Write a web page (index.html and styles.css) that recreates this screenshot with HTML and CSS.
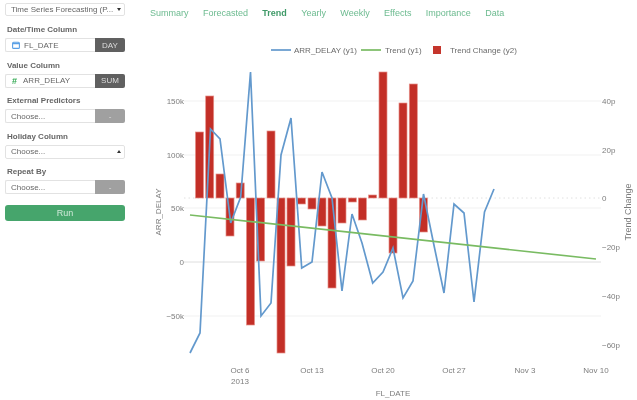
FILE: index.html
```html
<!DOCTYPE html>
<html lang="en">
<head>
<meta charset="utf-8">
<title>Time Series Forecasting</title>
<link rel="stylesheet" href="styles.css">
</head>
<body>
<div class="app">
  <aside class="sidebar">
    <div class="select top"><span class="select-text">Time Series Forecasting (P...</span><i class="caret"></i></div>
    <div class="label first">Date/Time Column</div>
    <div class="row">
      <div class="field">
        <svg class="ficon" viewBox="0 0 8 8"><rect x="0.6" y="1.2" width="6.8" height="6.2" rx="1" fill="none" stroke="#5aa0e6" stroke-width="1.1"/><path d="M0.6 2.6H7.4" stroke="#5aa0e6" stroke-width="1.3"/></svg>
        <span>FL_DATE</span>
      </div>
      <div class="btn dark">DAY</div>
    </div>
    <div class="label">Value Column</div>
    <div class="row">
      <div class="field"><b class="hash">#</b><span>ARR_DELAY</span></div>
      <div class="btn dark">SUM</div>
    </div>
    <div class="label">External Predictors</div>
    <div class="row">
      <div class="field plain"><span>Choose...</span></div>
      <div class="btn mid">-</div>
    </div>
    <div class="label">Holiday Column</div>
    <div class="select wide"><span class="select-text">Choose...</span><i class="caret up"></i></div>
    <div class="label">Repeat By</div>
    <div class="row">
      <div class="field plain"><span>Choose...</span></div>
      <div class="btn mid">-</div>
    </div>
    <div class="run">Run</div>
  </aside>
  <main class="main">
    <nav class="tabs">
      <a>Summary</a><a>Forecasted</a><a class="active">Trend</a><a>Yearly</a><a>Weekly</a><a>Effects</a><a>Importance</a><a>Data</a>
    </nav>
    <svg class="chart" viewBox="133 26 504 374" width="504" height="374">
      <g class="grid">
        <path d="M184 101H601M184 155H601M184 208H601M184 316H601"/>
        <path class="zero" d="M184 262H601"/>
        <path class="dots" d="M184 198H601"/>
      </g>
      <g class="bars">
        <rect x="195.5" y="132" width="8" height="66"/>
        <rect x="205.7" y="96" width="8" height="102"/>
        <rect x="216" y="174" width="8" height="24"/>
        <rect x="226" y="198" width="8" height="38"/>
        <rect x="236.2" y="183" width="8" height="15"/>
        <rect x="246.5" y="198" width="8" height="127"/>
        <rect x="256.6" y="198" width="8" height="63"/>
        <rect x="267" y="131" width="8" height="67"/>
        <rect x="277" y="198" width="8" height="155"/>
        <rect x="287" y="198" width="8" height="68"/>
        <rect x="297.4" y="198" width="8" height="6"/>
        <rect x="308" y="198" width="8" height="11"/>
        <rect x="318" y="198" width="8" height="28"/>
        <rect x="328" y="198" width="8" height="90"/>
        <rect x="338" y="198" width="8" height="25"/>
        <rect x="348.3" y="198" width="8" height="4"/>
        <rect x="358.4" y="198" width="8" height="22"/>
        <rect x="368.6" y="195" width="8" height="3"/>
        <rect x="379" y="72" width="8" height="126"/>
        <rect x="389" y="198" width="8" height="55"/>
        <rect x="399" y="103" width="8" height="95"/>
        <rect x="409.3" y="84" width="8" height="114"/>
        <rect x="419.4" y="198" width="8" height="34"/>
      </g>
      <polyline class="series" points="190,353 200,333 210.5,129 220,139 230.7,223 240.7,197 250.5,72 261,316 271,303 281,155 291,118 301.7,268 312,262 322,172 332,198 342,291 352,214 362,243 372.7,283 383,272 393,248 403,298 413,281 423.5,194 433.5,243 444,293 454,204 464,213 474,302 484.5,212 494,189"/>
      <path class="trend" d="M190 215L596 259"/>
      <g class="ticks end">
        <text x="184" y="104">150k</text>
        <text x="184" y="158">100k</text>
        <text x="184" y="211">50k</text>
        <text x="184" y="265">0</text>
        <text x="184" y="319">−50k</text>
      </g>
      <g class="ticks">
        <text x="602" y="104">40p</text>
        <text x="602" y="153">20p</text>
        <text x="602" y="201">0</text>
        <text x="602" y="250">−20p</text>
        <text x="602" y="299">−40p</text>
        <text x="602" y="348">−60p</text>
      </g>
      <g class="ticks middle">
        <text x="240" y="373">Oct 6</text>
        <text x="240" y="384">2013</text>
        <text x="312" y="373">Oct 13</text>
        <text x="383" y="373">Oct 20</text>
        <text x="454" y="373">Oct 27</text>
        <text x="525" y="373">Nov 3</text>
        <text x="596" y="373">Nov 10</text>
        <text x="393" y="396">FL_DATE</text>
        <text transform="translate(161 212) rotate(-90)">ARR_DELAY</text>
        <text class="big" transform="translate(631 212) rotate(-90)">Trend Change</text>
      </g>
      <g class="legend">
        <path class="series" d="M271 50H291"/>
        <text x="294" y="53">ARR_DELAY (y1)</text>
        <path class="trend" d="M361 50H381"/>
        <text x="385" y="53">Trend (y1)</text>
        <rect class="swatch" x="433" y="46" width="8" height="8"/>
        <text x="450" y="53">Trend Change (y2)</text>
      </g>
    </svg>
  </main>
</div>
</body>
</html>
```
FILE: styles.css
```css
html, body {
  margin: 0;
  padding: 0;
  background: #fff;
}
.app {
  display: flex;
  width: 637px;
  height: 400px;
  overflow: hidden;
  font-family: "Liberation Sans", Arial, sans-serif;
  filter: blur(0.6px);
}
.sidebar {
  width: 120px;
  padding: 3px 8px 0 5px;
  flex: none;
  display: flex;
  flex-direction: column;
  font-size: 8px;
  color: #666;
}
.select, .row {
  height: 14px;
  box-sizing: border-box;
  display: flex;
  align-items: stretch;
  flex: none;
}
.select {
  border: 1px solid #e2e2e2;
  border-radius: 2px;
  align-items: center;
  padding: 0 3px 0 5px;
  justify-content: space-between;
}
.select.top { height: 13px; }
.select-text { white-space: nowrap; color: #666; }
.caret {
  width: 0;
  height: 0;
  border-left: 2.5px solid transparent;
  border-right: 2.5px solid transparent;
  border-top: 3px solid #333;
}
.caret.up {
  border-top: 0;
  border-bottom: 3px solid #333;
}
.label {
  height: 8px;
  line-height: 8px;
  margin: 9.5px 0 4px 2px;
  font-weight: bold;
  color: #666;
  font-size: 8px;
  flex: none;
}
.label.first { margin-top: 10px; }
.field {
  flex: 1;
  box-sizing: border-box;
  border: 1px solid #e2e2e2;
  border-right: 0;
  border-radius: 2px 0 0 2px;
  display: flex;
  align-items: center;
  padding-left: 6px;
  color: #666;
}
.field.plain { padding-left: 5px; }
.ficon { width: 8px; height: 8px; margin-right: 4px; }
.hash { color: #2fa84f; margin-right: 6px; font-size: 9px; }
.btn {
  width: 30px;
  display: flex;
  align-items: center;
  justify-content: center;
  color: #ddd;
  border-radius: 0 2px 2px 0;
}
.btn.dark { background: #606060; }
.btn.mid { background: #a0a0a0; }
.run {
  margin-top: 11px;
  height: 16px;
  flex: none;
  border-radius: 3px;
  background: #46a56c;
  color: #cfe9d8;
  font-size: 9px;
  display: flex;
  align-items: center;
  justify-content: center;
}
.main {
  flex: 1;
  min-width: 0;
  display: flex;
  flex-direction: column;
}
.tabs {
  height: 26px;
  padding: 8px 0 0 17px;
  box-sizing: border-box;
  display: flex;
  gap: 14.4px;
  font-size: 9px;
  line-height: 11px;
  color: #6dbb90;
}
.tabs .active {
  font-weight: bold;
  color: #3f9a68;
}
.chart { display: block; flex: none; }
.grid path { fill: none; stroke: #f1f1f1; stroke-width: 1; }
.grid .zero { stroke: #dedede; }
.grid .dots { stroke: #e0e0e0; stroke-dasharray: 1.5 3; }
.bars rect { fill: #c32f27; stroke: #e58f88; stroke-width: 0.7; }
.series { fill: none; stroke: #6399cd; stroke-width: 1.7; stroke-linejoin: miter; }
.trend { fill: none; stroke: #79bb62; stroke-width: 1.7; }
.swatch { fill: #c5352c; }
text { font-family: "Liberation Sans", Arial, sans-serif; font-size: 8px; fill: #7d7d7d; }
.end text { text-anchor: end; }
.middle text { text-anchor: middle; }
.middle .big { font-size: 9px; }
.legend text { fill: #6a6a6a; }
```
